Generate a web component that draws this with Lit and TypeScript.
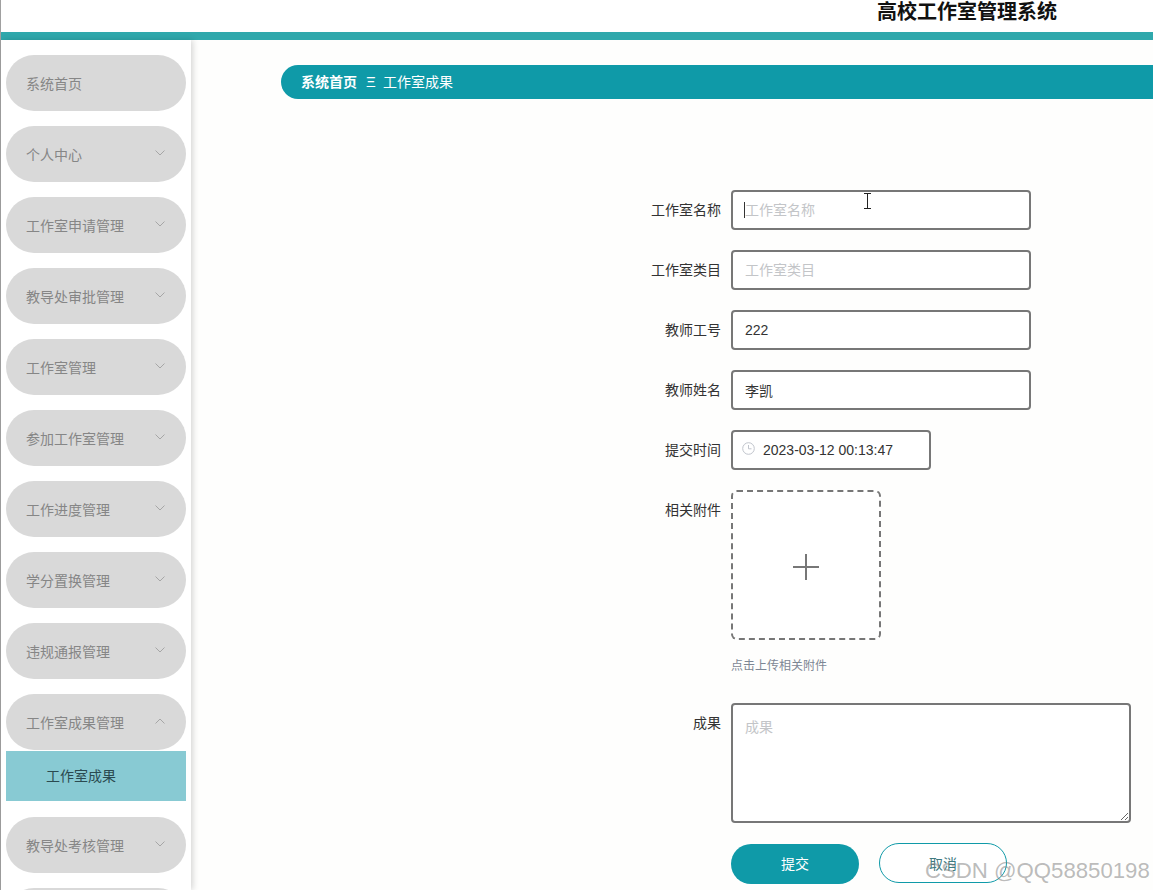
import { LitElement, html, css, svg } from "lit";
import { customElement } from "lit/decorators.js";

const MENUS: { label: string; arrow?: "down" | "up"; subs?: string[] }[] = [
  { label: "系统首页" },
  { label: "个人中心", arrow: "down" },
  { label: "工作室申请管理", arrow: "down" },
  { label: "教导处审批管理", arrow: "down" },
  { label: "工作室管理", arrow: "down" },
  { label: "参加工作室管理", arrow: "down" },
  { label: "工作进度管理", arrow: "down" },
  { label: "学分置换管理", arrow: "down" },
  { label: "违规通报管理", arrow: "down" },
  { label: "工作室成果管理", arrow: "up", subs: ["工作室成果"] },
  { label: "教导处考核管理", arrow: "down" },
  { label: "", arrow: "down" },
];

const chevron = (dir: "down" | "up") => html`<svg class="chev" width="10" height="6" viewBox="0 0 10 6">
  ${dir === "down"
    ? svg`<path d="M.5.5 5 5 9.5.5" fill="none" stroke="#a6a6a6" stroke-width="1"/>`
    : svg`<path d="M.5 5.5 5 1l4.5 4.5" fill="none" stroke="#a6a6a6" stroke-width="1"/>`}
</svg>`;

@customElement("app-root")
export class AppRoot extends LitElement {
  static styles = css`
    :host {
      display: block;
      position: relative;
      height: 890px;
      overflow: hidden;
      background: #fefefd;
      font-family: "Liberation Sans", "Noto Sans CJK SC", sans-serif;
      font-size: 14px;
      color: #333;
    }
    * { box-sizing: border-box; }
    .page { display: flex; flex-direction: column; height: 890px; border-left: 1px solid #a0a0a0; }
    .header { height: 32px; flex: none; background: #fff; display: flex; padding: 1px 0 0 876px; }
    .title { font-size: 20px; font-weight: 700; color: #111; line-height: 22px; white-space: nowrap; }
    .bar { height: 8px; flex: none; background: #2fa8ac; }
    .body { flex: 1; display: flex; min-height: 0; }
    .side {
      width: 190px; flex: none; background: #fff; padding: 15px 5px 0;
      box-shadow: 2px 0 6px rgba(0, 0, 0, .16);
      display: flex; flex-direction: column; gap: 15px; overflow: hidden;
    }
    .group { flex: none; display: flex; flex-direction: column; }
    .pill {
      width: 180px; height: 56px; border-radius: 28px; background: #d9d9d9; color: #868686;
      display: flex; align-items: center; justify-content: space-between;
      padding: 2px 21px 0 20px; line-height: 20px;
    }
    .chev { margin-top: -4px; }
    .sub {
      margin: 1px 0; height: 50px; width: 180px; background: #88cad3; color: #2b4a50;
      display: flex; align-items: center; padding: 0 0 2px 40px;
    }
    .main { flex: 1; min-width: 0; padding: 25px 0 0 90px; display: flex; flex-direction: column; overflow: hidden; }
    .crumb {
      flex: none; height: 34px; width: 1000px; border-radius: 17px 0 0 17px; background: #0f9aa8; color: #fff;
      display: flex; align-items: center; padding-left: 20px; line-height: 34px;
    }
    .crumb b { font-weight: 700; }
    .sep { margin: 0 9px; width: 8px; text-align: center; font-weight: 300; font-size: 15px; }
    .form { padding: 91px 0 0 300px; display: flex; flex-direction: column; }
    .row { display: flex; margin-bottom: 20px; flex: none; }
    .label { width: 150px; padding-right: 10px; text-align: right; line-height: 40px; color: #333; flex: none; }
    .ctl { position: relative; }
    input, textarea {
      display: block; font: inherit; color: #333; background: #fff;
      border: 2px solid #777; border-radius: 4px; outline: none;
    }
    input { width: 300px; height: 40px; padding: 0 12px; }
    input::placeholder, textarea::placeholder { color: #c3c5c8; opacity: 1; }
    .date input { width: 200px; padding-left: 30px; }
    .clock { position: absolute; left: 11px; top: 12px; }
    .caret { position: absolute; left: 13px; top: 12px; width: 1px; height: 16px; background: #333; }
    .up-row { margin-bottom: 0; }
    .upload {
      width: 150px; height: 150px; border: 2px dashed #777; border-radius: 6px;
      display: flex; align-items: center; justify-content: center; background: #fff; padding-top: 4px;
    }
    .tip { margin: 18px 0 29px 150px; font-size: 12px; line-height: 16px; color: #7d8794; flex: none; }
    textarea { width: 400px; height: 120px; padding: 12px; line-height: 20px; resize: vertical; }
    .ta-row { margin-bottom: 20px; }
    .actions { margin-left: 150px; display: flex; gap: 20px; align-items: flex-start; flex: none; }
    .btn { width: 128px; height: 40px; border-radius: 20px; display: flex; align-items: center; justify-content: center; font-size: 14px; }
    .submit { background: #0f9aa8; color: #fff; margin-top: 1px; padding-bottom: 2px; }
    .cancel { background: #fff; border: 1px solid #0f9aa8; color: #3f7a80; }
    .watermark {
      position: absolute; left: 925px; top: 857px; font-size: 22.2px; line-height: 28px;
      color: rgba(130, 130, 130, .55); white-space: nowrap;
    }
    .ibeam { position: absolute; left: 863px; top: 193px; }
  `;

  render() {
    return html`
      <div class="page">
        <div class="header"><div class="title">高校工作室管理系统</div></div>
        <div class="bar"></div>
        <div class="body">
          <nav class="side">
            ${MENUS.map(
              (m) => html`<div class="group">
                <div class="pill"><span>${m.label}</span>${m.arrow ? chevron(m.arrow) : ""}</div>
                ${(m.subs ?? []).map((s) => html`<div class="sub">${s}</div>`)}
              </div>`
            )}
          </nav>
          <main class="main">
            <div class="crumb"><b>系统首页</b><span class="sep">Ξ</span><span>工作室成果</span></div>
            <div class="form">
              <div class="row"><div class="label">工作室名称</div><div class="ctl"><input placeholder="工作室名称" /><span class="caret"></span></div></div>
              <div class="row"><div class="label">工作室类目</div><div class="ctl"><input placeholder="工作室类目" /></div></div>
              <div class="row"><div class="label">教师工号</div><div class="ctl"><input .value=${"222"} /></div></div>
              <div class="row"><div class="label">教师姓名</div><div class="ctl"><input .value=${"李凯"} /></div></div>
              <div class="row"><div class="label">提交时间</div>
                <div class="ctl date"><input .value=${"2023-03-12 00:13:47"} />
                  <svg class="clock" width="13" height="13" viewBox="0 0 13 13" fill="none" stroke="#c0c4cc" stroke-width="1"><circle cx="6.5" cy="6.5" r="5.8"/><path d="M6.5 3v3.8h3"/></svg>
                </div>
              </div>
              <div class="row up-row"><div class="label">相关附件</div>
                <div class="upload"><svg width="28" height="28" viewBox="0 0 28 28" stroke="#777" stroke-width="2"><path d="M14 1v26M1 14h26"/></svg></div>
              </div>
              <div class="tip">点击上传相关附件</div>
              <div class="row ta-row"><div class="label">成果</div><div class="ctl"><textarea placeholder="成果"></textarea></div></div>
              <div class="actions"><div class="btn submit">提交</div><div class="btn cancel">取消</div></div>
            </div>
          </main>
        </div>
      </div>
      <div class="watermark">CSDN @QQ58850198</div>
      <svg class="ibeam" width="9" height="16" viewBox="0 0 9 16" fill="none" stroke="#222" stroke-width="1"><path d="M1 .5h7M4.500 .5v15M1 15.500h7"/></svg>
    `;
  }
}
